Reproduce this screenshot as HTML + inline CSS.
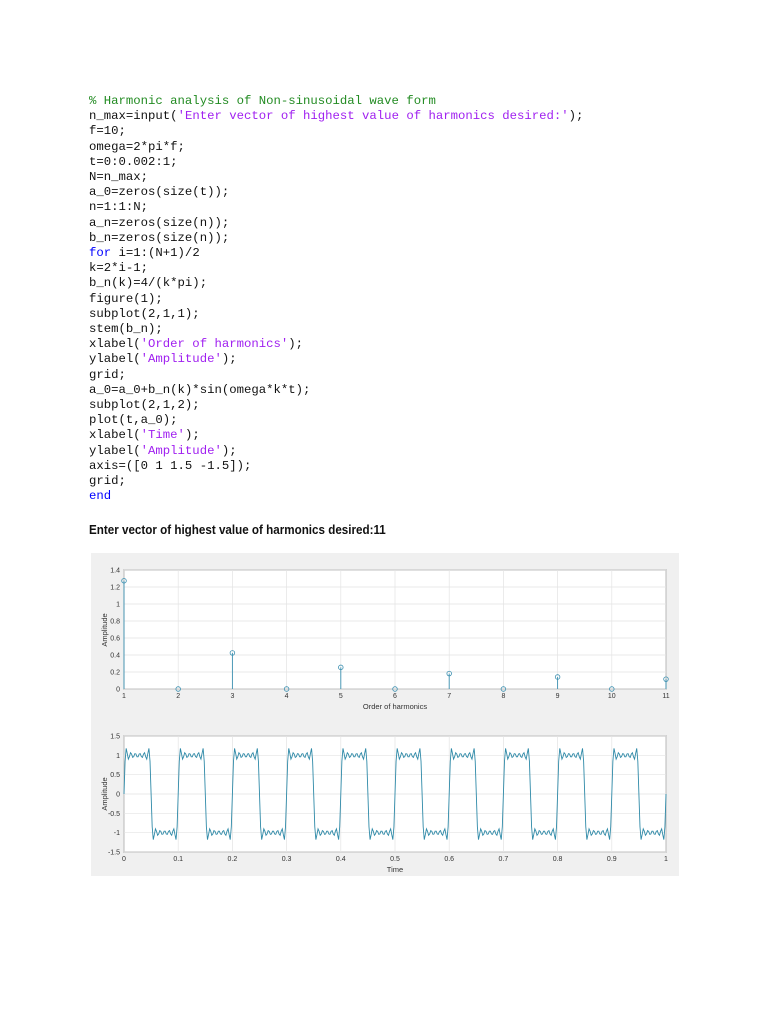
<!DOCTYPE html>
<html><head><meta charset="utf-8"><style>
body{margin:0;background:#fff;width:768px;height:1024px;position:relative;overflow:hidden}
pre{position:absolute;left:89px;top:94px;margin:0;font-family:"Liberation Mono",monospace;font-size:12.3px;line-height:15.2px;color:#111}
.c{color:#228b22}.s{color:#a020f0}.k{color:#0000ff}
.h{position:absolute;left:89px;top:522px;font-family:"Liberation Sans",sans-serif;font-weight:bold;font-size:13px;color:#111;transform-origin:0 0;transform:scaleX(0.895);white-space:nowrap}
svg{position:absolute;left:0;top:0}
</style></head><body>
<pre><span class="c">% Harmonic analysis of Non-sinusoidal wave form</span>
n_max=input(<span class="s">'Enter vector of highest value of harmonics desired:'</span>);
f=10;
omega=2*pi*f;
t=0:0.002:1;
N=n_max;
a_0=zeros(size(t));
n=1:1:N;
a_n=zeros(size(n));
b_n=zeros(size(n));
<span class="k">for</span> i=1:(N+1)/2
k=2*i-1;
b_n(k)=4/(k*pi);
figure(1);
subplot(2,1,1);
stem(b_n);
xlabel(<span class="s">'Order of harmonics'</span>);
ylabel(<span class="s">'Amplitude'</span>);
grid;
a_0=a_0+b_n(k)*sin(omega*k*t);
subplot(2,1,2);
plot(t,a_0);
xlabel(<span class="s">'Time'</span>);
ylabel(<span class="s">'Amplitude'</span>);
axis=([0 1 1.5 -1.5]);
grid;
<span class="k">end</span></pre>
<div class="h">Enter vector of highest value of harmonics desired:11</div>
<svg id="sv" width="768" height="1024" xmlns="http://www.w3.org/2000/svg" font-family="Liberation Sans, sans-serif" font-size="7" fill="#333">
<rect x="91" y="553" width="588" height="323" fill="#f0f0f0"/>
<rect x="124" y="570" width="542" height="119" fill="#fff" stroke="#333" stroke-width="0.8"/>
<rect x="124" y="736" width="542" height="116" fill="#fff" stroke="#333" stroke-width="0.8"/>
<g id="g"></g>
<text x="395" y="709" text-anchor="middle" font-size="7.5">Order of harmonics</text>
<text x="395" y="872" text-anchor="middle" font-size="7.5">Time</text>
<text transform="translate(107,630) rotate(-90)" text-anchor="middle" font-size="7.5">Amplitude</text>
<text transform="translate(107,794) rotate(-90)" text-anchor="middle" font-size="7.5">Amplitude</text>
</svg>
<script>
var g=document.getElementById('g'),h='';
for(var i=1;i<=11;i++){var x=124+(i-1)*54.2;h+='<line x1="'+x+'" y1="570" x2="'+x+'" y2="689" stroke="#e3e3e3" stroke-width="0.7"/><text x="'+x+'" y="698" text-anchor="middle">'+i+'</text>';}
for(var j=0;j<=7;j++){var v=j*0.2,y=689-v*85;h+='<line x1="124" y1="'+y+'" x2="666" y2="'+y+'" stroke="#e3e3e3" stroke-width="0.7"/><text x="120" y="'+(y+2.5)+'" text-anchor="end">'+(j==0?'0':(j%5==0?v.toFixed(0):+v.toFixed(1)))+'</text>';}
for(var k=1;k<=11;k++){var x=124+(k-1)*54.2,v=k%2?4/(k*Math.PI):0,y=689-v*85;h+='<line x1="'+x+'" y1="689" x2="'+x+'" y2="'+y+'" stroke="#3a8fb0" stroke-width="0.9"/><circle cx="'+x+'" cy="'+y+'" r="2.3" fill="none" stroke="#3a8fb0" stroke-width="0.8"/>';}
for(var i=0;i<=10;i++){var x=124+i*54.2;h+='<line x1="'+x+'" y1="736" x2="'+x+'" y2="852" stroke="#e3e3e3" stroke-width="0.7"/><text x="'+x+'" y="861" text-anchor="middle">'+(i==0?'0':i==10?'1':(i/10).toFixed(1))+'</text>';}
var yl=['1.5','1','0.5','0','-0.5','-1','-1.5'];
for(var j=0;j<7;j++){var y=736+j*116/6;h+='<line x1="124" y1="'+y+'" x2="666" y2="'+y+'" stroke="#e3e3e3" stroke-width="0.7"/><text x="120" y="'+(y+2.5)+'" text-anchor="end">'+yl[j]+'</text>';}
var d='';
for(var n=0;n<=500;n++){var t=n*0.002,s=0;for(var k=1;k<=11;k+=2)s+=4/(k*Math.PI)*Math.sin(2*Math.PI*10*k*t);d+=(n?'L':'M')+(124+t*542).toFixed(2)+' '+(794-s*38.67).toFixed(2);}
h+='<path d="'+d+'" fill="none" stroke="#2f8aa8" stroke-width="0.9"/>';
g.innerHTML=h;
</script>
</body></html>
